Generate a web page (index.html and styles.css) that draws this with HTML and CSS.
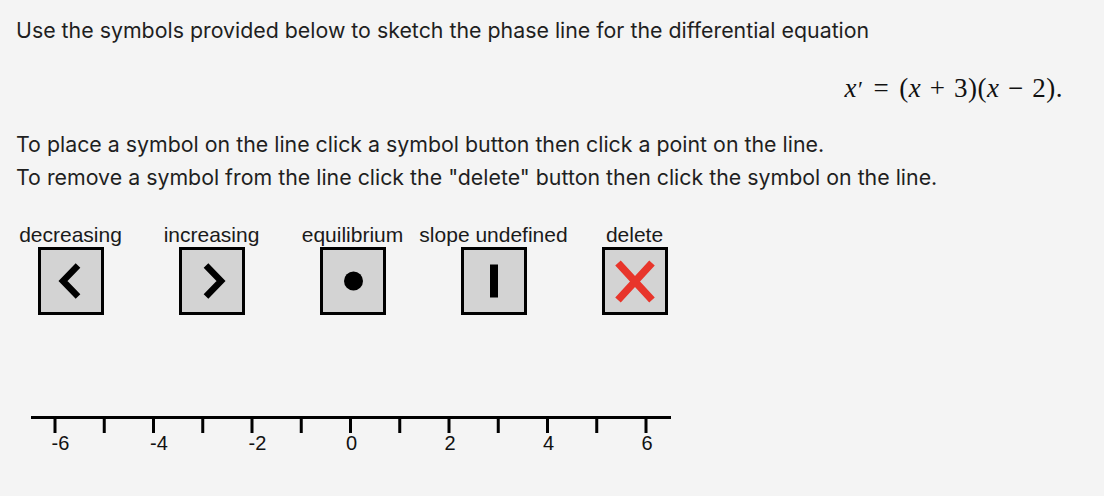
FILE: index.html
```html
<!DOCTYPE html>
<html>
<head>
<meta charset="utf-8">
<link rel="stylesheet" href="styles.css">
</head>
<body>
<div class="text">
  <p class="intro">Use the symbols provided below to sketch the phase line for the differential equation</p>
  <div class="eq"><span class="mi">x</span><span class="prime">′</span><span class="rel">=</span><span class="mo">(</span><span class="mi">x</span><span class="bin">+</span><span class="mn">3</span><span class="mo">)(</span><span class="mi">x</span><span class="bin">−</span><span class="mn">2</span><span class="mo">).</span></div>
  <p class="instr">To place a symbol on the line click a symbol button then click a point on the line.<br>To remove a symbol from the line click the "delete" button then click the symbol on the line.</p>
</div>
<div class="tools">
  <div class="tool">
    <div class="label">decreasing</div>
    <div class="btn"><svg width="60" height="62" viewBox="0 0 60 62"><polyline points="37,15.5 22,31 37,46.5" fill="none" stroke="#000" stroke-width="6.5" stroke-linejoin="miter"/></svg></div>
  </div>
  <div class="tool">
    <div class="label">increasing</div>
    <div class="btn"><svg width="60" height="62" viewBox="0 0 60 62"><polyline points="24,15.5 39,31 24,46.5" fill="none" stroke="#000" stroke-width="6.5" stroke-linejoin="miter"/></svg></div>
  </div>
  <div class="tool">
    <div class="label">equilibrium</div>
    <div class="btn"><svg width="60" height="62" viewBox="0 0 60 62"><circle cx="30.5" cy="31" r="9.5" fill="#000"/></svg></div>
  </div>
  <div class="tool">
    <div class="label">slope undefined</div>
    <div class="btn"><svg width="60" height="62" viewBox="0 0 60 62"><rect x="26" y="14.5" width="8" height="33" fill="#000"/></svg></div>
  </div>
  <div class="tool">
    <div class="label">delete</div>
    <div class="btn"><svg width="60" height="62" viewBox="0 0 60 62"><path d="M13,13 L47,50 M47,13 L13,50" fill="none" stroke="#e8352b" stroke-width="7.5"/></svg></div>
  </div>
</div>
<div class="numline">
  <svg width="700" height="64" viewBox="0 0 700 64">
    <line x1="31" y1="17.5" x2="671" y2="17.5" stroke="#000" stroke-width="3"/>
    <g stroke="#000" stroke-width="3">
      <line x1="55" y1="17" x2="55" y2="33"/>
      <line x1="104.25" y1="17" x2="104.25" y2="33"/>
      <line x1="153.5" y1="17" x2="153.5" y2="33"/>
      <line x1="202.75" y1="17" x2="202.75" y2="33"/>
      <line x1="252" y1="17" x2="252" y2="33"/>
      <line x1="301.25" y1="17" x2="301.25" y2="33"/>
      <line x1="350.5" y1="17" x2="350.5" y2="33"/>
      <line x1="399.75" y1="17" x2="399.75" y2="33"/>
      <line x1="449" y1="17" x2="449" y2="33"/>
      <line x1="498.25" y1="17" x2="498.25" y2="33"/>
      <line x1="547.5" y1="17" x2="547.5" y2="33"/>
      <line x1="596.75" y1="17" x2="596.75" y2="33"/>
      <line x1="646" y1="17" x2="646" y2="33"/>
    </g>
    <g class="ticklabels" text-anchor="middle">
      <text x="60.5" y="50">-6</text>
      <text x="159" y="50">-4</text>
      <text x="257.5" y="50">-2</text>
      <text x="351.5" y="50">0</text>
      <text x="450" y="50">2</text>
      <text x="548.5" y="50">4</text>
      <text x="647" y="50">6</text>
    </g>
  </svg>
</div>
</body>
</html>
```
FILE: styles.css
```css
html, body {
  margin: 0;
  padding: 0;
  background: #f4f4f4;
}
body {
  width: 1104px;
  height: 496px;
  overflow: hidden;
  font-family: Inter, "Noto Sans", sans-serif;
  color: #1f1f1f;
}
.text {
  padding: 0 16px;
}
.intro {
  margin: 0;
  padding-top: 17px;
  font-size: 21.35px;
  line-height: 27px;
}
.eq {
  margin-top: 29px;
  padding-right: 25px;
  text-align: right;
  font-family: "Liberation Serif", "DejaVu Serif", serif;
  font-size: 27px;
  line-height: 30px;
  letter-spacing: 0.5px;
  color: #111;
}
.eq .mi {
  font-style: italic;
}
.eq .prime {
  font-size: 23px;
  margin-left: 1px;
}
.eq .rel {
  margin: 0 10px;
}
.eq .bin {
  margin: 0 8.5px;
}
.instr {
  margin: 23px 0 0;
  font-size: 21.35px;
  line-height: 33px;
}
.tools {
  display: grid;
  grid-template-columns: repeat(5, 141px);
  margin-top: 29px;
}
.tool {
  display: flex;
  flex-direction: column;
  align-items: center;
}
.label {
  font-family: "Liberation Sans", Arial, sans-serif;
  font-size: 21px;
  line-height: 24px;
  color: #1a1a1a;
  white-space: nowrap;
}
.btn {
  width: 60px;
  height: 62px;
  border: 3px solid #000;
  background: #d3d3d3;
}
.btn svg {
  display: block;
}
.numline {
  margin-top: 85px;
}
.numline svg {
  display: block;
}
.ticklabels {
  font-family: "Liberation Sans", Arial, sans-serif;
  font-size: 20px;
  fill: #111;
}
```
